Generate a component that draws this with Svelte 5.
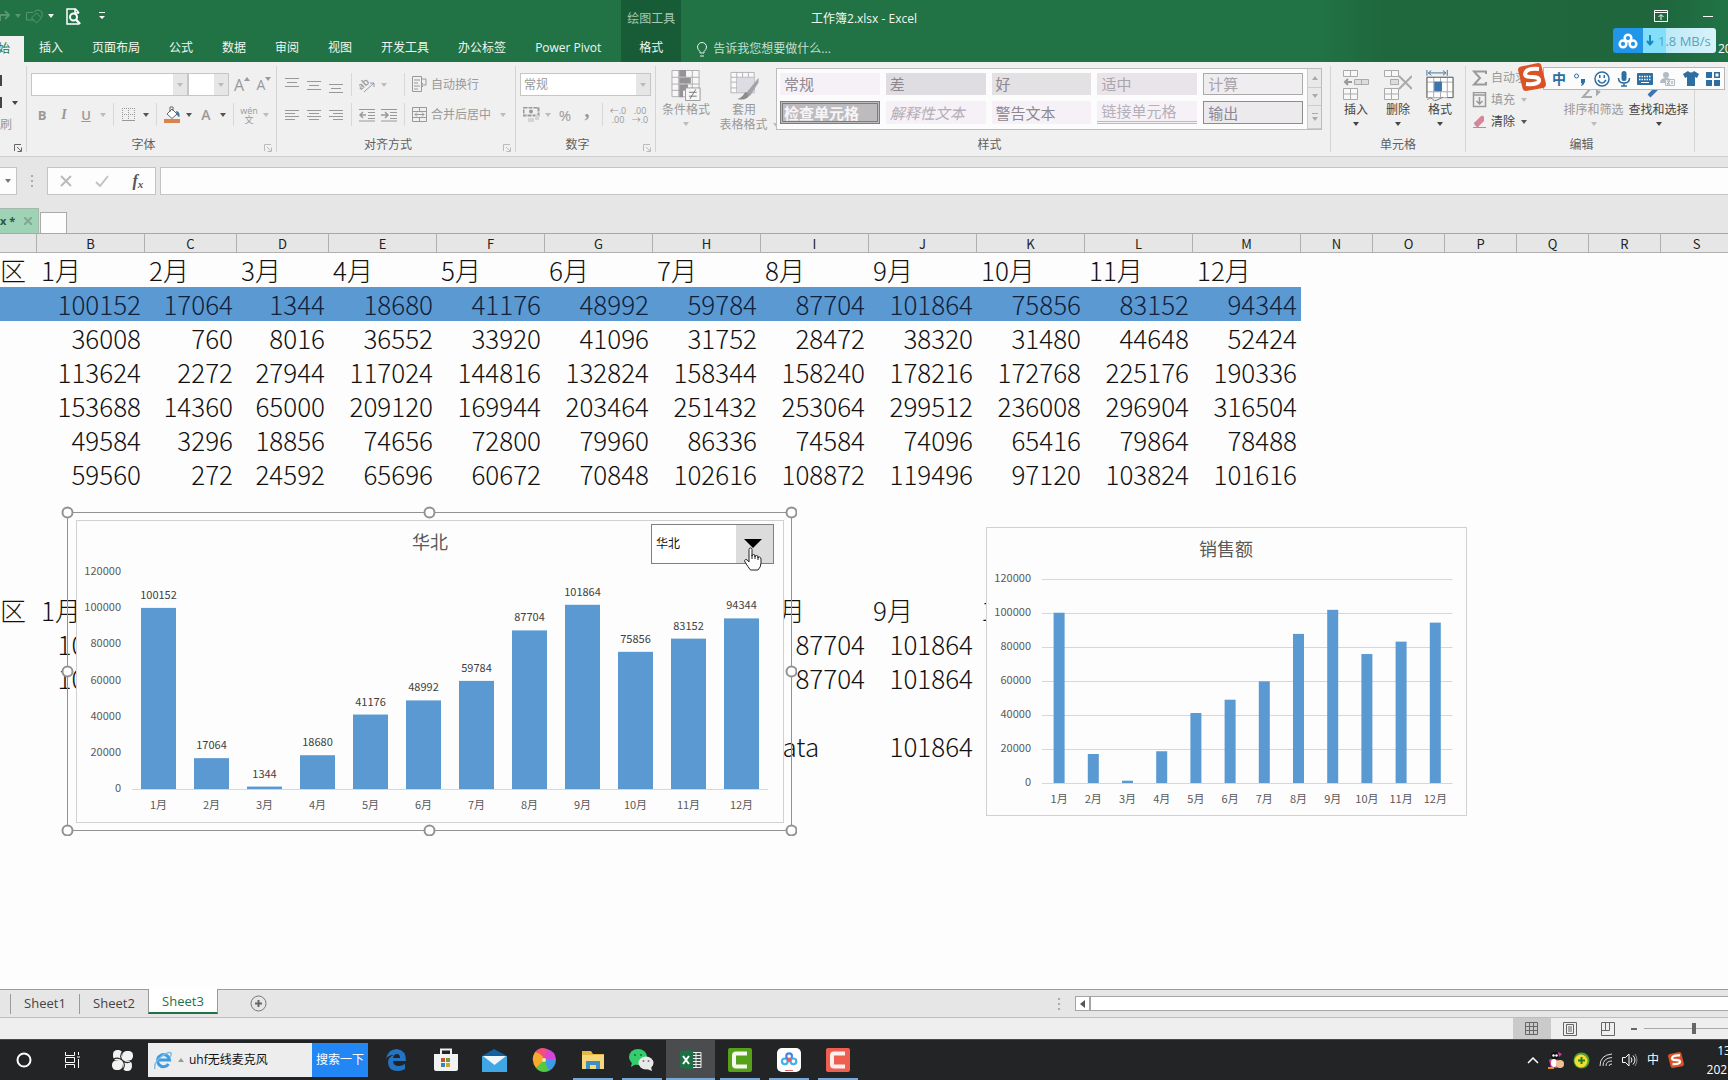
<script>
  const tabs = ['插入', '页面布局', '公式', '数据', '审阅', '视图', '开发工具', '办公标签', 'Power Pivot'];
  const months = ['1月', '2月', '3月', '4月', '5月', '6月', '7月', '8月', '9月', '10月', '11月', '12月'];
  const north = [100152, 17064, 1344, 18680, 41176, 48992, 59784, 87704, 101864, 75856, 83152, 94344];
  const columns = 'ABCDEFGHIJKLMNOPQRS'.split('');
  const rows = [
    ['区', ...months],
    ['', ...north],
    ['', 36008, 760, 8016, 36552, 33920, 41096, 31752, 28472, 38320, 31480, 44648, 52424],
    ['', 113624, 2272, 27944, 117024, 144816, 132824, 158344, 158240, 178216, 172768, 225176, 190336],
    ['', 153688, 14360, 65000, 209120, 169944, 203464, 251432, 253064, 299512, 236008, 296904, 316504],
    ['', 49584, 3296, 18856, 74656, 72800, 79960, 86336, 74584, 74096, 65416, 79864, 78488],
    ['', 59560, 272, 24592, 65696, 60672, 70848, 102616, 108872, 119496, 97120, 103824, 101616],
    [], [], [],
    ['区', '1月', '', '', '', '', '', '', '8月', '9月', '10月'],
    ['', 100152, '', '', '', '', '', '', 87704, 101864],
    ['', 100152, '', '', '', '', '', '', 87704, 101864],
    [],
    ['', '', '', '', '', '', '', '', 'Data', 101864],
    [], [], [], [], [], []
  ];
  const styles = [
    ['常规', 'normal'], ['差', 'bad'], ['好', 'good'], ['适中', 'neutral'], ['计算', 'calc'],
    ['检查单元格', 'check'], ['解释性文本', 'explain'], ['警告文本', 'warn'], ['链接单元格', 'link'], ['输出', 'output']
  ];
  const ticks = [0, 20000, 40000, 60000, 80000, 100000, 120000];
  const handles = [[6, 6], [368, 6], [730, 6], [6, 165], [730, 165], [6, 324], [368, 324], [730, 324]];
  const regions = ['华北', '华东', '华南'];
  let region = $state('华北');
</script>

{#snippet caret()}
  <svg class="caret" width="6" height="4" viewBox="0 0 6 4" aria-hidden="true"><path d="M0 0h6L3 4z" fill="currentColor" /></svg>
{/snippet}

{#snippet footer(text, launcher)}
  <div class="foot" class:shift={launcher}>
    <span class="foot-text">{text}</span>
    {#if launcher}
      <button class="launch" aria-label="{text}设置">
        <svg width="8" height="8" viewBox="0 0 8 8"><path d="M.5 7V.5H7M3 3l4 4M7.500 3.500v4h-4" fill="none" stroke="currentColor" /></svg>
      </button>
    {/if}
  </div>
{/snippet}

{#snippet lines(list)}
  <svg width="15" height="16" viewBox="0 0 15 16">
    {#each list as [x, y, w]}<rect {x} {y} width={w} height="1" fill="currentColor" />{/each}
  </svg>
{/snippet}

{#snippet bars(o)}
  <svg class="plot" width={o.w} height={o.h} viewBox="0 0 {o.w} {o.h}" role="img" aria-label={o.title}>
    <rect x="0.5" y="0.5" width={o.w - 1} height={o.h - 1} fill="#fdfdfd" stroke="#d0d2d2" />
    <text class="chart-title" x={o.tx} y={o.ty} text-anchor="middle">{o.title}</text>
    {#each ticks as t}
      {#if o.grid || t === 0}
        <rect x={o.x0} y={Math.round(o.base - (t / 120000) * o.span)} width={o.step * 12} height="1" fill="#d3d9da" />
      {/if}
      <text class="tick" x={o.ax} y={o.base - (t / 120000) * o.span + 3} text-anchor="end">{t}</text>
    {/each}
    {#each north as v, i}
      {@const cx = o.x0 + o.step * (i + 0.5)}
      {@const bh = (v / 120000) * o.span}
      <rect x={cx - o.bar / 2} y={o.base - bh} width={o.bar} height={bh} fill="#5b99d2" />
      {#if o.values}<text class="value" x={cx} y={o.base - bh - 9} text-anchor="middle">{v}</text>{/if}
      <text class="tick" x={cx} y={o.base + o.cat} text-anchor="middle">{months[i]}</text>
    {/each}
  </svg>
{/snippet}

{#snippet cloud(a, b, c)}
  <g fill="none" stroke-width="3">
    <circle cx="6" cy="13" r="4" stroke={a} /><circle cx="12" cy="6" r="4" stroke={b} /><circle cx="18" cy="13" r="4" stroke={c} />
  </g>
{/snippet}

{#snippet sogou(size)}
  <svg width={size} height={size} viewBox="0 0 28 28">
    <path d="M0 7Q0 4 3 3.500L20 0q3 0 3.500 3L28 21q0 3-3 4L8 28q-3 0-3.500-3z" fill="#dc5224" />
    <path d="M21 6Q8 5 7 11q0 3 7 3 8 0 7 4-2 4-13 3" fill="none" stroke="#fff" stroke-width="4" />
  </svg>
{/snippet}

<div class="app">
  <header class="top">
    <div class="left">
      <div class="quick">
        <button class="qa dim redo" aria-label="恢复"><svg width="12" height="14" viewBox="0 0 12 14"><path d="M0 12V6h9M5 2l4 4-4 4" fill="none" stroke="currentColor" stroke-width="2" /></svg></button>
        <span class="dim qc">{@render caret()}</span>
        <button class="qa dim" aria-label="形状"><svg width="17" height="15" viewBox="0 0 17 15"><path d="M8 11H.5V3.500H7M5.500 9l5-5 5 5-5 5zM8 3q4-4 8 0v5" fill="none" stroke="currentColor" /></svg></button>
        <span class="qc">{@render caret()}</span>
        <button class="qa preview" aria-label="打印预览"><svg width="15" height="17" viewBox="0 0 15 17"><path d="M13 5L9.500 1H1v15h12M9 1v4h4" fill="none" stroke="#fff" stroke-width="1.500" /><circle cx="7.500" cy="9" r="3.500" fill="none" stroke="#fff" stroke-width="2" /><path d="M10 11.500l4 4.500" stroke="#fff" stroke-width="2.500" /></svg></button>
        <button class="qa" aria-label="自定义快速访问工具栏"><svg width="6" height="8" viewBox="0 0 6 8"><path d="M0 0h6v1H0zM0 4h6L3 7z" fill="#fff" /></svg></button>
      </div>
      <nav class="tabs">
        <button class="home">始</button>
        {#each tabs as t}<button class="tab">{t}</button>{/each}
      </nav>
    </div>
    <div class="context">
      <span class="context-name">绘图工具</span>
      <button class="tab ctx">格式</button>
    </div>
    <div class="right">
      <div class="window">
        <button aria-label="功能区显示选项"><svg width="14" height="12" viewBox="0 0 14 12"><path d="M.5.5h13v11H.5zM.5 2.500h13M7 10V5M4.500 7L7 4.500 9.500 7" fill="none" stroke="#fff" /></svg></button>
        <button aria-label="最小化"><svg width="10" height="12" viewBox="0 0 10 12"><path d="M0 6.500h10" stroke="#fff" /></svg></button>
      </div>
      <div class="ask">
        <svg width="10" height="15" viewBox="0 0 10 15"><path d="M3 11V9.500Q.5 7.500.5 5a4.500 4.500 0 0 1 9 0Q9.500 7.500 7 9.500V11zM3 14h4" fill="none" stroke="#e8f3ec" /></svg>
        <button>告诉我您想要做什么...</button>
        <span class="account">20</span>
      </div>
    </div>
    <div class="title">工作簿2.xlsx - Excel</div>
    <div class="speed">
      <span class="speed-logo"><svg width="20" height="16" viewBox="0 0 24 19">{@render cloud('#fff', '#fff', '#fff')}</svg></span>
      <span class="speed-text"><svg width="8" height="11" viewBox="0 0 8 11"><path d="M4 0v9M1 6l3 3.500L7 6" fill="none" stroke="#1787c2" stroke-width="2" /></svg>1.8 MB/s</span>
    </div>
  </header>

  <section class="ribbon" aria-label="功能区">
    <div class="group clip">
      <div class="clip-row"><span class="stub"></span></div>
      <div class="clip-row"><span class="stub"></span><span class="dark">{@render caret()}</span></div>
      <div class="clip-row">刷</div>
      {@render footer('', true)}
    </div>

    <div class="group font">
      <div class="row">
        <div class="combo family"><input aria-label="字体" /><button aria-label="字体列表">{@render caret()}</button></div>
        <div class="combo size"><input aria-label="字号" /><button aria-label="字号列表">{@render caret()}</button></div>
        <button class="ib big-a">A<svg width="6" height="4" viewBox="0 0 6 4"><path d="M0 4h6L3 0z" fill="currentColor" /></svg></button>
        <button class="ib small-a">A<svg width="6" height="4" viewBox="0 0 6 4"><path d="M0 0h6L3 4z" fill="currentColor" /></svg></button>
      </div>
      <div class="row">
        <button class="ib b">B</button><button class="ib i">I</button><button class="ib u">U</button><span class="ca">{@render caret()}</span>
        <i class="sep"></i>
        <button class="ib" aria-label="边框"><svg width="14" height="14" viewBox="0 0 14 14"><path d="M.5 0v13M6.500 0v13M12.500 0v13M0 .5h13M0 6.500h13" stroke="currentColor" stroke-dasharray="1 1" /><path d="M0 12.500h13" stroke="currentColor" /></svg></button><span class="ca dark">{@render caret()}</span>
        <i class="sep"></i>
        <button class="ib" aria-label="填充颜色"><svg width="17" height="17" viewBox="0 0 17 17"><path d="M3 8l5-5 5 5-5 4.500zM6 6V1h3v4" fill="#fff" stroke="#666" /><path d="M12 5q4 0 3.500 6-2 0-3-4z" fill="#42729b" /><path d="M0 13h16v4H0z" fill="#d9834f" /></svg></button><span class="ca dark">{@render caret()}</span>
        <button class="ib fa">A</button><span class="ca dark">{@render caret()}</span>
        <i class="sep"></i>
        <button class="ib pinyin"><span>wén</span><span>文</span></button><span class="ca">{@render caret()}</span>
      </div>
      {@render footer('字体', true)}
    </div>

    <div class="group align">
      <div class="row">
        <button class="ib" aria-label="顶端对齐">{@render lines([[0, 1, 14], [2, 5, 10], [0, 9, 14]])}</button>
        <button class="ib" aria-label="垂直居中">{@render lines([[0, 4, 14], [2, 8, 10], [0, 12, 14]])}</button>
        <button class="ib" aria-label="底端对齐">{@render lines([[0, 7, 14], [2, 11, 10], [0, 15, 14]])}</button>
        <i class="sep"></i>
        <button class="ib" aria-label="方向"><svg width="17" height="16" viewBox="0 0 17 16"><text class="rot" x="-1" y="10" transform="rotate(-40 5 8)">ab</text><path d="M5 15L15 6M11 6h4v4" fill="none" stroke="currentColor" /></svg></button><span class="ca">{@render caret()}</span>
        <i class="sep far"></i>
        <button class="wide"><svg width="16" height="17" viewBox="0 0 16 17"><path d="M.5.5h9v15h-9zM2 4h6M2 7h4M2 10h6M2 13h4M9 3h5v6H9M11 7L9 9l2 2" fill="none" stroke="currentColor" /></svg>自动换行</button>
      </div>
      <div class="row">
        <button class="ib" aria-label="左对齐">{@render lines([[0, 3, 14], [0, 6, 10], [0, 9, 14], [0, 12, 10]])}</button>
        <button class="ib" aria-label="居中">{@render lines([[0, 3, 14], [2, 6, 10], [0, 9, 14], [2, 12, 10]])}</button>
        <button class="ib" aria-label="右对齐">{@render lines([[0, 3, 14], [4, 6, 10], [0, 9, 14], [4, 12, 10]])}</button>
        <i class="sep"></i>
        <button class="ib" aria-label="减少缩进"><svg width="17" height="14" viewBox="0 0 17 14"><path d="M0 1.500h16M9 4.500h7M9 7.500h7M9 10.500h7M0 13h16" stroke="currentColor" /><path d="M7 7H1M4 4L1 7l3 3" fill="none" stroke="currentColor" stroke-width="1.500" /></svg></button>
        <button class="ib" aria-label="增加缩进"><svg width="17" height="14" viewBox="0 0 17 14"><path d="M0 1.500h16M9 4.500h7M9 7.500h7M9 10.500h7M0 13h16" stroke="currentColor" /><path d="M0 7h6M4 4l3 3-3 3" fill="none" stroke="currentColor" stroke-width="1.500" /></svg></button>
        <i class="sep"></i>
        <button class="wide"><svg width="16" height="16" viewBox="0 0 16 16"><path d="M.5.5h14v14H.5zM.5 4.500h14M.5 10.500h14M7.500.5v4M7.500 10.500v4M3 7.500h9M5 5.500l-2 2 2 2M10 5.500l2 2-2 2" fill="none" stroke="currentColor" /></svg>合并后居中</button><span class="ca late">{@render caret()}</span>
      </div>
      {@render footer('对齐方式', true)}
    </div>

    <div class="group number">
      <div class="row">
        <div class="combo format"><input aria-label="数字格式" value="常规" /><button aria-label="数字格式列表">{@render caret()}</button></div>
      </div>
      <div class="row">
        <button class="ib" aria-label="会计数字格式"><svg width="17" height="16" viewBox="0 0 17 16"><path d="M.5.5h15v8h-15z" fill="none" stroke="currentColor" stroke-width="2" stroke-dasharray="4 1" /><circle cx="8" cy="4.500" r="2" fill="currentColor" /><path d="M5 11h6v4H5zM12 8h4v5h-4z" fill="#d4d4d4" /></svg></button><span class="ca">{@render caret()}</span>
        <button class="ib pct">%</button><button class="ib comma">,</button>
        <i class="sep"></i>
        <button class="ib dec"><span>←.0</span><span>.00</span></button>
        <button class="ib dec"><span>.00</span><span>→.0</span></button>
      </div>
      {@render footer('数字', true)}
    </div>

    <div class="group styles">
      <div class="style-row">
        <button class="big"><svg width="31" height="32" viewBox="0 0 31 32"><path d="M.5.5h28v27H.5zM7.500.5v27M14.500.5v27M21.500.5v27M.5 7.500h28M.5 14.500h28M.5 21h28" fill="#f8f6f8" stroke="#b0adb0" /><path d="M8 0h7v7H8zM8 8h12v6H8zM8 15h9v6H8zM8 21h4v7H8z" fill="#969396" /><path d="M14.500 18.500h15v13h-15z" fill="#f8f8f8" stroke="#999" /><path d="M18 23h8M18 27h8M25 20l-6 10" stroke="#777" /></svg><span>条件格式</span>{@render caret()}</button>
        <button class="big"><svg width="31" height="32" viewBox="0 0 31 32"><path d="M1.500 2.500h24v21h-24zM7.500 2.500v21M13.500 2.500v21M19.500 2.500v21M1.500 7.500h24M1.500 12.500h24M1.500 18.500h24" fill="#faf8fb" stroke="#b5b2b6" /><path d="M8 8h17v15H8z" fill="#dddbe3" /><path d="M30 8L17 24l4 3 9-14z" fill="#a6a3a6" /><path d="M16 23q4 0 4 4-4 5-12 3 5-1 8-7z" fill="#8f8c8f" /></svg><span>套用</span><span class="two">表格格式{@render caret()}</span></button>
        <div class="gallery">
          <div class="cells">
            {#each styles as [name, kind]}<button class="style {kind}">{name}</button>{/each}
          </div>
          <div class="scroller">
            <button aria-label="上一行"><svg width="6" height="4" viewBox="0 0 6 4"><path d="M0 4h6L3 0z" fill="#aaa" /></svg></button>
            <button aria-label="下一行">{@render caret()}</button>
            <button aria-label="更多样式"><svg width="6" height="8" viewBox="0 0 6 8"><path d="M0 0h6v1H0zM0 4h6L3 8z" fill="#aaa" /></svg></button>
          </div>
        </div>
      </div>
      {@render footer('样式', false)}
    </div>

    <div class="group cellsg">
      <div class="trio">
        <button class="big dark"><svg width="28" height="31" viewBox="0 0 28 31"><path d="M1.500.5h14v6h-14zM8.500.5v6M1.500 18.500h14v11h-14zM8.500 18.500v11M1.500 24h14" fill="#f8f8f8" stroke="#aaa" /><path d="M12.500 9.500h14v5h-14zM19.500 9.500v5" fill="#ddd" stroke="#aaa" /><path d="M10 12H3M6 9l-3 3 3 3" fill="none" stroke="#999" stroke-width="2" /></svg><span>插入</span>{@render caret()}</button>
        <button class="big dark"><svg width="28" height="31" viewBox="0 0 28 31"><path d="M.5.5h14v6H.5zM7.500.5v6M.5 18.500h14v11H.5zM7.500 18.500v11M.5 24h14" fill="#f8f8f8" stroke="#aaa" /><path d="M6.500 9.500h8v5h-8z" fill="#ddd" stroke="#aaa" /><path d="M15 6l13 13M28 6L15 19" stroke="#aaa" stroke-width="2" /></svg><span>删除</span>{@render caret()}</button>
        <button class="big dark"><svg width="30" height="32" viewBox="0 0 30 32"><path d="M1.500 0v6M22.500 0v6M3 3h18M6 .5L3 3l3 2.500M18 .5L21 3l-3 2.500" fill="none" stroke="#41719c" /><path d="M1.500 7.500h27v21h-27zM8.500 7.500v21M15.500 7.500v21M22.500 7.500v21M1.500 12.500h27M1.500 22.500h27" fill="#fff" stroke="#aaa" /><path d="M1.500 29V7.500h27v21h-6" fill="none" stroke="#666" /><path d="M9 12h8v10H9z" fill="#3d74ab" /><path d="M2 31q3-4 5-1t5 1l6-3" fill="none" stroke="#777" /></svg><span>格式</span>{@render caret()}</button>
      </div>
      {@render footer('单元格', false)}
    </div>

    <div class="group edit">
      <div class="edit-row">
        <div class="stack">
          <button class="wide"><svg width="16" height="16" viewBox="0 0 16 16"><path d="M14 4V1.500H2L8 8l-6 6.500h12V12" fill="none" stroke="#999" stroke-width="2" /></svg>自动求和</button>
          <button class="wide"><svg width="16" height="16" viewBox="0 0 16 16"><path d="M1.500.5h12v14h-12zM1.500 3h12M7.500 5v7M4.500 9l3 3 3-3" fill="none" stroke="#999" stroke-width="1.500" /></svg>填充<span class="ca">{@render caret()}</span></button>
          <button class="wide dark"><svg width="16" height="14" viewBox="0 0 16 14"><path d="M2 8l7-7q2-1 3 1v4l-6 6q-3 0-4-4z" fill="#dd8399" /><path d="M1 12.500h13M2 8q3-1 4 4" stroke="#999" fill="none" /></svg>清除<span class="ca dark">{@render caret()}</span></button>
        </div>
        <button class="big"><svg width="28" height="31" viewBox="0 0 28 31"><path d="M3 18h8L3 27h9M17 10v14l3-3" fill="none" stroke="#aaa" stroke-width="2" /></svg><span>排序和筛选</span>{@render caret()}</button>
        <button class="big dark"><svg width="28" height="31" viewBox="0 0 28 31"><circle cx="15" cy="11" r="8" fill="none" stroke="#3d74ab" stroke-width="2" /><path d="M12 18L1 29" stroke="#3d74ab" stroke-width="4" transform="translate(3 -3)" /></svg><span>查找和选择</span>{@render caret()}</button>
      </div>
      {@render footer('编辑', false)}
    </div>

    <div class="ime" aria-label="输入法">
      {@render sogou(28)}
      <div class="ime-bar">
        <b>中</b>
        <svg width="14" height="14" viewBox="0 0 14 14"><circle cx="3.500" cy="4" r="2" fill="none" stroke="#2d6ea3" /><path d="M8 7h4v3q-1 3-4 4l1-3H8z" fill="#2d6ea3" /></svg>
        <svg width="16" height="16" viewBox="0 0 16 16"><circle cx="8" cy="8" r="7" fill="none" stroke="#2d6ea3" stroke-width="1.500" /><path d="M4 9q4 6 8 0" fill="none" stroke="#2d6ea3" stroke-width="1.500" /><path d="M5 4h1.500v3H5zM9.500 4H11v3H9.500z" fill="#2d6ea3" /></svg>
        <svg width="14" height="16" viewBox="0 0 14 16"><rect x="4.500" width="5" height="10" rx="2.500" fill="#2d6ea3" /><path d="M1.500 7q0 5 5.500 5t5.500-5M7 12v3M4 15h6" fill="none" stroke="#2d6ea3" stroke-width="1.500" /></svg>
        <svg width="16" height="12" viewBox="0 0 16 12"><rect width="16" height="12" rx="1" fill="#2d6ea3" /><path d="M2 3.500h12M2 6.500h12" stroke="#fff" stroke-width="1.500" stroke-dasharray="1.500 1" /><path d="M4 9.500h8" stroke="#fff" /></svg>
        <svg width="16" height="16" viewBox="0 0 16 16"><circle cx="6" cy="4" r="3" fill="#b3bac4" /><path d="M0 12q0-5 6-5t6 5z" fill="#b3bac4" /><path d="M5.500 8.500h9v6h-9z" fill="#f4f4f4" stroke="#b3bac4" /><path d="M7 10h3l-3 3h3M12 10v3" fill="none" stroke="#9aa2ac" /></svg>
        <svg width="16" height="15" viewBox="0 0 16 15"><path d="M5 0q3 3 6 0l5 3-2 4-2-1v9H4V6L2 7 0 3z" fill="#2d6ea3" /></svg>
        <svg width="14" height="14" viewBox="0 0 14 14"><path d="M0 0h6v6H0zM0 8h6v6H0zM8 8h6v6H8z" fill="#2d6ea3" /><path d="M8.750.75h4.500v4.500h-4.500z" fill="none" stroke="#2d6ea3" stroke-width="1.500" /></svg>
      </div>
    </div>
  </section>

  <section class="formula" aria-label="编辑栏">
    <button class="name-box" aria-label="名称框">{@render caret()}</button>
    <svg class="dots" width="3" height="12" viewBox="0 0 3 12"><path d="M0 0h2v2H0zM0 5h2v2H0zM0 10h2v2H0z" fill="#aaa" /></svg>
    <div class="fx">
      <button aria-label="取消"><svg width="12" height="12" viewBox="0 0 12 12"><path d="M1 1l10 10M11 1L1 11" stroke="#bbb" stroke-width="2" /></svg></button>
      <button aria-label="输入"><svg width="14" height="12" viewBox="0 0 14 12"><path d="M1 7l4 4 8-10" fill="none" stroke="#c3c3c3" stroke-width="2" /></svg></button>
      <button class="fn" aria-label="插入函数">f<sub>x</sub></button>
    </div>
    <input class="formula-input" aria-label="公式" />
  </section>

  <div class="books">
    <button class="book">x * <svg width="8" height="8" viewBox="0 0 8 8"><path d="M0 0l8 8M8 0L0 8" stroke="#86a596" stroke-width="2" /></svg></button>
    <button class="book-new" aria-label="新建"></button>
  </div>

  <main class="sheet">
    <table>
      <colgroup>
        {#each columns as c, i}<col class={i === 0 ? 'ca0' : i === 2 || i === 3 ? 'c92' : i < 13 ? 'c108' : 'c72'} />{/each}
      </colgroup>
      <thead>
        <tr>{#each columns as c, i}<th scope="col">{i ? c : ''}</th>{/each}</tr>
      </thead>
      <tbody>
        {#each rows as r, ri}
          <tr>
            {#each columns as c, i}<td class:hit={ri === 1 && i < 13} class:text={typeof r[i] === 'string'}>{r[i] ?? ''}</td>{/each}
          </tr>
        {/each}
      </tbody>
    </table>

    <figure class="chart selected">
      <svg class="frame" width="736" height="330" viewBox="0 0 736 330" aria-hidden="true">
        <path d="M6.500 6.500h724v318H6.500z" fill="none" stroke="#929292" />
        {#each handles as [x, y]}<circle cx={x + 0.5} cy={y + 0.5} r="5" fill="#fff" stroke="#929292" stroke-width="2" />{/each}
      </svg>
      {@render bars({ w: 708, h: 303, title: region, tx: 354, ty: 29, x0: 56, step: 53, bar: 35, base: 269, span: 217, ax: 45, cat: 20, grid: false, values: true })}
      <div class="picker">
        <select aria-label="地区" bind:value={region}>{#each regions as r}<option>{r}</option>{/each}</select>
        <svg class="picker-arrow" width="18" height="9" viewBox="0 0 18 9" aria-hidden="true"><path d="M0 0h18L9 9z" /></svg>
        <svg class="hand" width="20" height="24" viewBox="0 0 20 24" aria-hidden="true"><path d="M6 13V2.500Q6 1 7.500 1T9 2.500V9q0-1.500 1.500-1.500T12 9v1q0-1.500 1.500-1.500T15 10v1q0-1.500 1.500-1T18 12v4q0 4-3 7H7.500Q5 20 2 15q-1-2 .5-2.500T6 15z" fill="#fff" stroke="#222" /><path d="M9 8v4M12 9v3M15 10v3" stroke="#222" /></svg>
      </div>
    </figure>

    <figure class="chart sales">
      {@render bars({ w: 481, h: 289, title: '销售额', tx: 240, ty: 29, x0: 56, step: 34.2, bar: 11, base: 256, span: 204, ax: 45, cat: 20, grid: true, values: false })}
    </figure>
  </main>

  <nav class="sheet-tabs" aria-label="工作表">
    <button class="st">Sheet1</button>
    <button class="st">Sheet2</button>
    <button class="st on">Sheet3</button>
    <button class="add" aria-label="新工作表"><svg width="17" height="17" viewBox="0 0 17 17"><circle cx="8.500" cy="8.500" r="7.500" fill="none" stroke="#777" /><path d="M8.500 5v7M5 8.500h7" stroke="#666" stroke-width="2" /></svg></button>
    <svg class="dots" width="3" height="12" viewBox="0 0 3 12"><path d="M0 0h2v2H0zM0 5h2v2H0zM0 10h2v2H0z" fill="#aaa" /></svg>
    <div class="hscroll"><button aria-label="向左滚动"><svg width="5" height="8" viewBox="0 0 5 8"><path d="M5 0v8L0 4z" fill="#555" /></svg></button></div>
  </nav>

  <footer class="status">
    <button class="view on" aria-label="普通"><svg width="14" height="14" viewBox="0 0 14 14"><path d="M.5.5h12v12H.5zM4.500.5v12M8.500.5v12M.5 4.500h12M.5 8.500h12" fill="none" stroke="#666" /></svg></button>
    <button class="view" aria-label="页面布局"><svg width="14" height="14" viewBox="0 0 14 14"><path d="M.5.5h13v13H.5zM3.500 2.500h7v9h-7zM5 5h4M5 7h4M5 9h4" fill="none" stroke="#666" /></svg></button>
    <button class="view" aria-label="分页预览"><svg width="14" height="14" viewBox="0 0 14 14"><path d="M.5.5h13v13H.5zM.5 8.500h8v-8M4.500.5v8" fill="none" stroke="#666" /></svg></button>
    <button class="minus" aria-label="缩小"></button>
    <input class="zoom" type="range" min="0" max="100" value="50" aria-label="缩放" />
  </footer>

  <div class="taskbar">
    <button class="tb" aria-label="搜索"><svg width="16" height="16" viewBox="0 0 16 16"><circle cx="8" cy="8" r="6.500" fill="none" stroke="#fff" stroke-width="2" /></svg></button>
    <button class="tb" aria-label="任务视图"><svg width="17" height="16" viewBox="0 0 17 16"><path d="M1.500 0v3.500h9V0M1.500 5.500h9v5h-9zM1.500 16v-3.500h9V16M14.500 0v3M14.500 7v9M13 5h3" fill="none" stroke="#fff" /></svg></button>
    <button class="tb w52" aria-label="应用"><svg width="21" height="21" viewBox="0 0 20 20"><g fill="#f2f2f2"><rect x="1" y="0" width="9" height="10" rx="4" /><rect x="10" y="1" width="10" height="9" rx="4" /><rect x="10" y="10" width="9" height="10" rx="4" /><rect x="0" y="10" width="10" height="9" rx="4" /><rect x="6" y="6" width="8" height="8" /></g><path d="M11 0q-5 6-1 10 5 4 9 0M1 9q5-3 9 1 4 5-1 10" fill="none" stroke="#262626" /></svg></button>
    <div class="search">
      <svg width="19" height="19" viewBox="0 0 19 19"><path d="M14.500 13a6 6 0 1 1 1-4H5" fill="none" stroke="#3d9be0" stroke-width="3" /><path d="M1 18Q-1 12 8 5q7-5 9-3 1 1-1 4" fill="none" stroke="#7cbcec" stroke-width="1.500" /></svg>
      <svg width="6" height="4" viewBox="0 0 6 4"><path d="M0 4h6L3 0z" fill="#999" /></svg>
      <input aria-label="搜索内容" value="uhf无线麦克风" />
      <button>搜索一下</button>
    </div>
    <button class="tb app1" aria-label="Edge"><svg width="21" height="22" viewBox="0 0 21 22"><path d="M0 10Q2 0 11 0q9 1 9 12H7q0 5 6 5 3 0 6-2v5q-3 2-7 2-10 0-10-9 0-5 6-7-6 0-8 4zm7-1h7q0-4-3-4t-4 4z" fill="#2474c4" /></svg></button>
    <button class="tb app1" aria-label="应用商店"><svg width="24" height="24" viewBox="0 0 24 24"><path d="M7 7V1.500h10V7" fill="none" stroke="#eee" stroke-width="2" /><path d="M0 6h24v15q0 2-2 2H2q-2 0-2-2z" fill="#f2f2f2" /><path d="M7 10h4v4H7z" fill="#c8532c" /><path d="M12 10h4v4h-4z" fill="#719c3b" /><path d="M7 15h4v4H7z" fill="#3b86ae" /><path d="M12 15h4v4h-4z" fill="#d3a22c" /></svg></button>
    <button class="tb app1" aria-label="邮件"><svg width="25" height="23" viewBox="0 0 25 23"><path d="M0 7l12-7 13 7v3H0z" fill="#12609f" /><path d="M0 7h25v16H0z" fill="#3fa7e6" /><path d="M1 7h23L12.500 16z" fill="#f2f6fa" /></svg></button>
    <button class="tb app1" aria-label="浏览器"><svg width="24" height="24" viewBox="0 0 24 24"><path d="M12 12L3 4Q8-2 15 1q4 5-3 11" fill="#f0507a" /><path d="M12 12l3-11q8 2 9 10-6 4-12 1" fill="#d545d8" /><path d="M12 12l12-1q0 8-7 12-6-4-5-11" fill="#3f9be8" /><path d="M12 12l5 11q-8 3-13-3 2-7 8-8" fill="#55c83f" /><path d="M12 12L4 20Q-2 12 3 4q7 1 9 8" fill="#f6a92c" /><circle cx="12" cy="12" r="2" fill="#fbe9a8" /></svg></button>
    <button class="tb app1 run" aria-label="文件资源管理器"><svg width="22" height="20" viewBox="0 0 22 20"><path d="M0 1h9l2 3h11v15H0z" fill="#e5b93d" /><path d="M0 5h22v14H0z" fill="#f6d77a" /><path d="M4 11h14v8h-4v-4H8v4H4z" fill="#3f8fc4" /></svg></button>
    <button class="tb app1 run" aria-label="微信"><svg width="25" height="22" viewBox="0 0 25 22"><ellipse cx="9" cy="8" rx="9" ry="8" fill="#35cd6b" /><path d="M3 13l-1 5 5-3z" fill="#35cd6b" /><circle cx="6" cy="6" r="1" fill="#176b36" /><circle cx="12" cy="6" r="1" fill="#176b36" /><ellipse cx="17" cy="14" rx="7.500" ry="6.500" fill="#e9e9e9" /><path d="M22 18l1 4-5-2z" fill="#e9e9e9" /><circle cx="14.500" cy="12" r="1" fill="#777" /><circle cx="19.500" cy="12" r="1" fill="#777" /></svg></button>
    <button class="tb app1 run live" aria-label="Excel"><svg width="22" height="20" viewBox="0 0 22 20"><path d="M11 2.500h10v15H11M11 5.500h10M11 8.500h10M11 11.500h10M11 14.500h10M16 2v16" fill="none" stroke="#e8f2ec" /><path d="M0 1l13-1v20L0 18z" fill="#1e7145" /><path d="M3 6l6 8M9 6l-6 8" stroke="#fff" stroke-width="2" /></svg></button>
    <button class="tb app1 run" aria-label="Camtasia"><svg width="24" height="24" viewBox="0 0 24 24"><rect width="24" height="24" rx="2" fill="#57a01a" /><path d="M19 5.500H8q-2 0-2 2v9q0 2 2 2h11" fill="none" stroke="#f3f9ee" stroke-width="4" /></svg></button>
    <button class="tb app1 run" aria-label="百度网盘"><svg width="24" height="24" viewBox="0 0 24 24"><rect width="24" height="24" rx="5" fill="#fff" /><g transform="translate(3.500 4) scale(.72)">{@render cloud('#3fb2ee', '#4784e0', '#3fb2ee')}<circle cx="12" cy="11" r="3" fill="#ec5b66" /></g><path d="M8 22.500h8" stroke="#e0606a" /></svg></button>
    <button class="tb app1 run" aria-label="录像机"><svg width="24" height="24" viewBox="0 0 24 24"><rect width="24" height="24" rx="2" fill="#ee5f50" /><path d="M19 5.500H8q-2 0-2 2v9q0 2 2 2h11" fill="none" stroke="#fdf0ee" stroke-width="4" /></svg></button>
    <div class="tray">
      <svg width="12" height="8" viewBox="0 0 12 8"><path d="M1 7l5-5 5 5" fill="none" stroke="#fff" stroke-width="1.500" /></svg>
      <svg width="16" height="17" viewBox="0 0 16 17"><path d="M1 8q4-3 8-2l3 6-3 4H3z" fill="#d63c9a" /><circle cx="7" cy="4" r="4" fill="#111" /><circle cx="5.500" cy="3.500" r="1.200" fill="#fff" /><circle cx="8.500" cy="3.500" r="1.200" fill="#fff" /><ellipse cx="6" cy="11" rx="3" ry="4" fill="#fff" /><circle cx="12" cy="12" r="4" fill="#efc08f" /><path d="M0 16h6" stroke="#e78c20" stroke-width="2" /><path d="M10 0l4 2-3 3z" fill="#d63c9a" /></svg>
      <svg width="17" height="17" viewBox="0 0 17 17"><circle cx="8.500" cy="8.500" r="8" fill="#4f9f34" /><circle cx="8" cy="9" r="6.500" fill="#f2de2d" /><path d="M8.500 5v7M5 8.500h7" stroke="#25782b" stroke-width="2" /></svg>
      <svg width="14" height="14" viewBox="0 0 14 14"><path d="M1 13Q1 2 13 1M4 13Q4 5 13 4.500M7 13q0-5 6-5M10 13q0-2 3-2" fill="none" stroke="#ddd" /></svg>
      <svg width="16" height="14" viewBox="0 0 16 14"><path d="M.5 4.500h3L7 1v12L3.500 9.500h-3zM9 4.500q2 2.500 0 5M11 2.500q4 4.500 0 9" fill="none" stroke="#fff" /><path d="M13 1q4 6 0 12" fill="none" stroke="#888" /></svg>
      <span>中</span>
      {@render sogou(16)}
    </div>
    <div class="clock"><span>13:</span><span>2021</span></div>
  </div>
</div>

<style>
  :global(body) { margin: 0; }
  .app { display: flex; flex-direction: column; height: 100vh; overflow: hidden; background: #fdfdfd; color: #444; font: 12px/16px 'Open Sans', 'Noto Sans CJK SC', sans-serif; white-space: nowrap; }
  .app * { box-sizing: border-box; }
  button, input, select { font: inherit; color: inherit; margin: 0; padding: 0; border: 0; background: none; border-radius: 0; min-width: 0; outline: none; }
  svg { display: block; flex: none; }

  .top { position: relative; display: flex; flex: none; height: 62px; color: #f0f7f2; background: linear-gradient(90deg, #217346 76%, #1f683e 80%, #1f663d 96%, #217346); }
  .left, .context, .right { display: flex; flex-direction: column; }
  .left { padding-right: 6px; }
  .right { flex: 1; }
  .quick { display: flex; align-items: center; height: 36px; padding-bottom: 4px; gap: 4px; }
  .qa { display: flex; }
  .redo { width: 10px; overflow: hidden; }
  .qc { padding: 0 1px; }
  .preview { padding: 0 14px 0 7px; }
  .dim { color: #58966f; }
  .tabs { display: flex; height: 26px; }
  .home { width: 24px; padding-right: 14px; background: #f1f1f1; color: #217346; direction: rtl; }
  .tab { padding: 0 14px 2px 15px; }
  .context { width: 60px; background: #185c37; text-align: center; }
  .context-name { height: 36px; line-height: 38px; color: #a5c9b3; }
  .ctx { height: 26px; padding: 0 0 2px; }
  .window { display: flex; justify-content: flex-end; align-items: center; gap: 35px; height: 36px; padding: 0 15px 4px 0; }
  .window button { display: flex; }
  .ask { display: flex; align-items: center; height: 26px; padding-left: 16px; gap: 6px; color: #c5dfcf; }
  .account { margin-left: auto; width: 10px; color: #fff; }
  .title { position: absolute; left: 0; right: 0; top: 11px; text-align: center; pointer-events: none; }
  .speed { position: absolute; right: 12px; top: 28px; display: flex; width: 103px; height: 25px; border-radius: 3px; overflow: hidden; font-size: 13px; color: #5aa3c0; }
  .speed-logo { display: flex; align-items: center; justify-content: center; width: 30px; background: #2196e9; }
  .speed-text { display: flex; align-items: center; flex: 1; gap: 4px; padding-left: 3px; background: linear-gradient(90deg, #83dff9 0 23px, #bceaf7 23px, #d9f3f9); }

  .ribbon { position: relative; display: flex; flex: none; height: 95px; padding: 4px 33px 4px 0; background: #f0f0f0; border-bottom: 1px solid #cfcfcf; color: #999; }
  .group { display: flex; flex-direction: column; flex: none; border-right: 1px solid #d4d4d4; gap: 7px; padding-top: 7px; }
  .row { display: flex; align-items: center; height: 23px; }
  .foot { position: relative; display: flex; align-items: center; justify-content: center; height: 14px; line-height: 14px; margin-top: auto; color: #606060; }
  .shift { padding-right: 20px; }
  .launch { position: absolute; right: 4px; bottom: 0; display: flex; color: #bbb; }
  .clip { width: 27px; gap: 6px; }
  .clip-row { display: flex; align-items: center; height: 17px; gap: 10px; overflow: hidden; }
  .clip .launch { color: #666; }
  .stub { width: 2px; height: 11px; background: #444; }
  .font { width: 250px; padding-left: 4px; }
  .align { width: 239px; padding-left: 4px; }
  .number { width: 140px; padding-left: 4px; }
  .styles { flex: 1; gap: 2px; padding: 2px 8px 0 1px; }
  .cellsg { width: 135px; gap: 2px; padding: 4px 4px 0; }
  .edit { width: 229px; gap: 2px; padding: 4px 3px 0 6px; }
  .dark { color: #444; }
  .combo { display: flex; height: 23px; border: 1px solid #c6c6c6; background: #fff; }
  .combo input { flex: 1; width: 0; padding-left: 3px; }
  .combo button { display: flex; align-items: center; justify-content: center; width: 14px; background: #e6e6e6; color: #bbb; }
  .family { width: 157px; }
  .size { width: 41px; margin-right: 2px; }
  .format { width: 131px; }
  .ib { display: flex; align-items: center; justify-content: center; flex: none; width: 22px; height: 22px; }
  .ca { display: flex; justify-content: center; flex: none; width: 12px; color: #bcbcbc; }
  .ca.dark { color: #555; }
  .late { margin-left: 6px; }
  .sep { flex: none; width: 1px; height: 23px; margin: 0 4px; background: #d8d8d8; }
  .far { margin-left: 14px; }
  .big-a { font-size: 16px; }
  .small-a { font-size: 14px; }
  .big-a svg, .small-a svg { margin-bottom: 12px; }
  .b { font-weight: 700; font-size: 13px; }
  .i { font: italic 700 14px 'Liberation Serif', serif; }
  .u { font-weight: 600; text-decoration: underline; font-size: 13px; }
  .fa { font-size: 14px; font-weight: 600; }
  .pinyin, .dec { flex-direction: column; font-size: 9px; line-height: 9px; }
  .pct { font-size: 15px; }
  .comma { font: 700 20px/12px 'Liberation Serif', serif; padding-bottom: 10px; }
  .rot { font: 600 10px 'Open Sans', sans-serif; fill: currentColor; }
  .wide { display: flex; align-items: center; gap: 3px; padding-left: 3px; }
  .style-row { display: flex; }
  .big { display: flex; flex-direction: column; align-items: center; flex: 1; line-height: 15px; padding-top: 2px; }
  .big > svg:first-child { height: 31px; margin-bottom: 1px; }
  .big > .caret { margin-top: 5px; }
  .big:not(.dark) .caret { color: #bcbcbc; }
  .style-row .big { flex: none; width: 58px; }
  .two { display: flex; align-items: center; gap: 5px; padding-left: 10px; }
  .gallery { display: flex; flex: 1; height: 62px; margin-left: 3px; border: 1px solid #bcbcbc; background: #fdfcfd; }
  .cells { display: grid; flex: 1; grid-template-columns: repeat(5, 1fr); gap: 6px; padding: 4px 4px 6px 3px; }
  .style { padding-left: 4px; text-align: left; font-size: 15px; line-height: 20px; background: #f6f1f7; color: #8d878f; }
  .style.bad { background: #dfdde1; }
  .style.good { background: #e3e1e4; }
  .style.neutral { background: #e8e4e9; color: #aaa4ab; }
  .style.calc { background: #f0edf1; border: 1px solid #aaa; color: #aaa4ab; }
  .style.check { background: #bdbbbe; border: 3px double #7d7d7d; color: #f7f5f7; font-weight: 700; padding-left: 1px; line-height: 14px; }
  .style.explain { font-style: italic; color: #b3adb5; }
  .style.link { border-bottom: 3px double #bbb; color: #b5afb7; }
  .style.output { background: #edeaee; border: 1px solid #8d8d8d; }
  .scroller { display: grid; width: 14px; color: #aaa; border-left: 1px solid #ccc; background: #e9e9e9; }
  .scroller button { display: flex; align-items: center; justify-content: center; border-bottom: 1px solid #ccc; }
  .trio, .edit-row { display: flex; margin-top: -2px; }
  .stack { display: flex; flex-direction: column; gap: 6px; width: 90px; padding-top: 2px; }
  .stack .wide { padding-left: 0; height: 16px; }
  .edit-row .big { flex: none; width: 65px; }

  .ime { position: absolute; right: 3px; top: 1px; display: flex; }
  .ime svg { z-index: 1; }
  .ime-bar { display: flex; align-items: center; justify-content: space-between; width: 182px; height: 23px; margin: 4px 0 0 -3px; padding: 0 4px 0 8px; border: 1px solid #b8b8b8; background: #fcfcfc; }
  .ime-bar b { color: #2d6ea3; font-size: 14px; }

  .formula { display: flex; align-items: center; flex: none; height: 46px; padding-top: 2px; background: #e6e6e6; }
  .name-box { display: flex; align-items: center; justify-content: center; width: 17px; height: 28px; border: 1px solid #c4c4c4; border-left: 0; background: #fdfdfd; color: #777; }
  .formula .dots { margin: 0 13px 0 14px; }
  .fx { display: flex; align-items: center; justify-content: space-around; width: 109px; height: 28px; border: 1px solid #c4c4c4; background: #fdfdfd; }
  .fn { font: italic 700 16px/20px 'Liberation Serif', serif; color: #555; }
  .fn sub { font-size: 11px; line-height: 0; vertical-align: -2px; }
  .formula-input { flex: 1; height: 28px; margin-left: 4px; border: 1px solid #c4c4c4; border-right: 0; background: #fdfdfd; }

  .books { display: flex; align-items: flex-end; flex: none; height: 31px; padding-top: 5px; gap: 1px; background: #e6e6e6; border-bottom: 1px solid #a8a8a8; }
  .book { display: flex; align-items: center; gap: 9px; width: 39px; height: 25px; background: #9fd3b6; border: 1px solid #a5b8ad; border-width: 1px 1px 0 0; font-weight: 700; font-size: 11px; color: #27593d; }
  .book-new { width: 27px; height: 21px; border: 1px solid #aaa; border-bottom: 0; background: #fdfdfd; }

  .sheet { position: relative; flex: 1; min-height: 0; overflow: hidden; background: #fdfdfd; }
  table { border-collapse: separate; border-spacing: 0; table-layout: fixed; width: 1733px; }
  .ca0 { width: 37px; }
  .c92 { width: 92px; }
  .c108 { width: 108px; }
  .c72 { width: 72px; }
  th { height: 19px; padding: 1px 0 0; background: #e6e6e6; border: solid #b0b0b0; border-width: 0 1px 1px 0; font: 13px/17px 'Noto Sans CJK SC', sans-serif; color: #222; }
  td { height: 34px; padding: 0 4px; overflow: hidden; text-align: right; font: 300 26px/34px 'Noto Sans CJK SC', sans-serif; color: #111; }
  td.text { text-align: left; }
  td:first-child { padding: 0; }
  td.hit { background: #5b99d2; color: #10213c; }

  .chart { position: absolute; margin: 0; }
  .selected { left: 61px; top: 272px; }
  .selected .plot { margin: -316px 0 0 15px; }
  .sales { left: 986px; top: 293px; }
  .plot, .frame { position: relative; }
  .chart-title { font: 18px 'Noto Sans CJK SC', sans-serif; fill: #595959; }
  .tick, .value { font: 11px 'Noto Sans CJK SC', sans-serif; fill: #595959; }
  .value { fill: #404040; }
  .picker { position: absolute; left: 590px; top: 18px; width: 123px; height: 40px; }
  .picker select { width: 100%; height: 100%; padding-left: 4px; appearance: none; border: 1px solid #7f7f7f; background: linear-gradient(90deg, #fff 84px, #dcdcdc 84px); color: #111; }
  .picker-arrow { position: absolute; right: 12px; top: 15px; }
  .hand { position: absolute; right: 11px; top: 23px; }

  .sheet-tabs { display: flex; align-items: center; flex: none; height: 29px; border-top: 1px solid #9b9b9b; border-bottom: 1px solid #bdbdbd; background: #e6e6e6; padding-left: 10px; font-size: 13px; }
  .st { height: 20px; width: 69px; padding-bottom: 2px; border-left: 1px solid #9b9b9b; }
  .st.on { align-self: flex-start; height: 25px; width: 70px; margin-top: -1px; padding-bottom: 0; border: solid #9b9b9b; border-width: 0 1px; border-bottom: 2px solid #217346; background: #fff; color: #217346; }
  .add { display: flex; margin-left: 32px; }
  .sheet-tabs .dots { margin-left: auto; }
  .hscroll { display: flex; width: 653px; height: 15px; margin-left: 14px; border: 1px solid #a5a5a5; border-right: 0; background: #fff; }
  .hscroll button { display: flex; align-items: center; justify-content: center; width: 15px; border-right: 2px solid #a5a5a5; }

  .status { display: flex; align-items: center; justify-content: flex-end; flex: none; height: 22px; background: #efefef; border-bottom: 1px solid #2c5a40; }
  .view { display: flex; align-items: center; justify-content: center; width: 38px; height: 21px; }
  .view.on { background: #cacaca; }
  .minus { width: 6px; height: 2px; margin: 0 7px 0 4px; background: #666; }
  .zoom { appearance: none; width: 100px; height: 12px; margin-right: -16px; background: linear-gradient(#a8a8a8, #a8a8a8) center / 100% 1px no-repeat; }
  .zoom::-webkit-slider-thumb { appearance: none; width: 4px; height: 11px; background: #666; }

  .taskbar { display: flex; align-items: center; flex: none; height: 40px; background: #222425; color: #fff; overflow: hidden; }
  .tb { display: flex; align-items: center; justify-content: center; flex: none; width: 48px; height: 40px; }
  .w52 { width: 52px; }
  .app1 { width: 49px; }
  .run { background: linear-gradient(#76a9d8, #76a9d8) center bottom / 40px 2px no-repeat; }
  .live { background: linear-gradient(#76a9d8, #76a9d8) center bottom / 100% 2px no-repeat #4a4c4d; }
  .search { display: flex; align-items: center; gap: 5px; width: 220px; height: 34px; margin-right: 4px; padding-left: 6px; background: #ededed; color: #111; }
  .search input { flex: 1; width: 0; }
  .search button { width: 56px; height: 34px; background: #2287f5; color: #fff; }
  .tray { display: flex; align-items: center; gap: 9px; margin-left: auto; }
  .clock { display: flex; flex-direction: column; align-items: flex-end; width: 30px; margin: 0 -6px 0 20px; line-height: 19px; }
</style>
